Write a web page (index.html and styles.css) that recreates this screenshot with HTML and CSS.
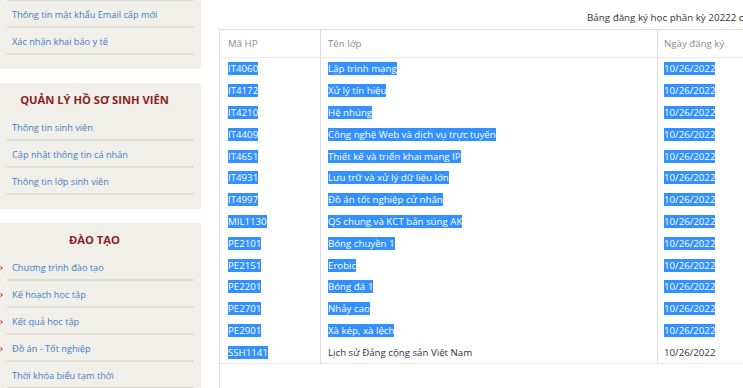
FILE: index.html
```html
<!DOCTYPE html>
<html lang="vi">
<head>
<meta charset="utf-8">
<title>Bảng đăng ký học phần</title>
<link rel="stylesheet" href="styles.css">
</head>
<body>
<div class="page">
  <aside class="sidebar">
    <section class="panel">
      <ul class="menu menu-top">
        <li><a class="link">Thông tin mật khẩu Email cấp mới</a></li>
        <li><a class="link">Xác nhận khai báo y tế</a></li>
      </ul>
    </section>
    <section class="panel">
      <h3 class="panel-title">QUẢN LÝ HỒ SƠ SINH VIÊN</h3>
      <ul class="menu">
        <li><a class="link">Thông tin sinh viên</a></li>
        <li><a class="link">Cập nhật thông tin cá nhân</a></li>
        <li><a class="link">Thông tin lớp sinh viên</a></li>
      </ul>
    </section>
    <section class="panel">
      <h3 class="panel-title">ĐÀO TẠO</h3>
      <ul class="menu">
        <li class="bullet"><a class="link">Chương trình đào tạo</a></li>
        <li class="bullet"><a class="link">Kế hoạch học tập</a></li>
        <li class="bullet"><a class="link">Kết quả học tập</a></li>
        <li class="bullet"><a class="link">Đồ án - Tốt nghiệp</a></li>
        <li><a class="link">Thời khóa biểu tạm thời</a></li>
      </ul>
    </section>
  </aside>
  <main class="main">
    <div class="caption">Bảng đăng ký học phần kỳ 20222 của</div>
    <div class="table-box">
      <table class="grid">
        <thead>
          <tr><th class="c1">Mã HP</th><th class="c2">Tên lớp</th><th class="c3">Ngày đăng ký</th></tr>
        </thead>
        <tbody>
          <tr><td class="c1"><span class="sel">IT4060</span></td><td class="c2"><span class="sel">Lập trình mạng</span></td><td class="c3"><span class="sel">10/26/2022</span></td></tr>
          <tr><td class="c1"><span class="sel">IT4172</span></td><td class="c2"><span class="sel">Xử lý tín hiệu</span></td><td class="c3"><span class="sel">10/26/2022</span></td></tr>
          <tr><td class="c1"><span class="sel">IT4210</span></td><td class="c2"><span class="sel">Hệ nhúng</span></td><td class="c3"><span class="sel">10/26/2022</span></td></tr>
          <tr><td class="c1"><span class="sel">IT4409</span></td><td class="c2"><span class="sel">Công nghệ Web và dịch vụ trực tuyến</span></td><td class="c3"><span class="sel">10/26/2022</span></td></tr>
          <tr><td class="c1"><span class="sel">IT4651</span></td><td class="c2"><span class="sel">Thiết kế và triển khai mạng IP</span></td><td class="c3"><span class="sel">10/26/2022</span></td></tr>
          <tr><td class="c1"><span class="sel">IT4931</span></td><td class="c2"><span class="sel">Lưu trữ và xử lý dữ liệu lớn</span></td><td class="c3"><span class="sel">10/26/2022</span></td></tr>
          <tr><td class="c1"><span class="sel">IT4997</span></td><td class="c2"><span class="sel">Đồ án tốt nghiệp cử nhân</span></td><td class="c3"><span class="sel">10/26/2022</span></td></tr>
          <tr><td class="c1"><span class="sel">MIL1130</span></td><td class="c2"><span class="sel">QS chung và KCT bắn súng AK</span></td><td class="c3"><span class="sel">10/26/2022</span></td></tr>
          <tr><td class="c1"><span class="sel">PE2101</span></td><td class="c2"><span class="sel">Bóng chuyền 1</span></td><td class="c3"><span class="sel">10/26/2022</span></td></tr>
          <tr><td class="c1"><span class="sel">PE2151</span></td><td class="c2"><span class="sel">Erobic</span></td><td class="c3"><span class="sel">10/26/2022</span></td></tr>
          <tr><td class="c1"><span class="sel">PE2201</span></td><td class="c2"><span class="sel">Bóng đá 1</span></td><td class="c3"><span class="sel">10/26/2022</span></td></tr>
          <tr><td class="c1"><span class="sel">PE2701</span></td><td class="c2"><span class="sel">Nhảy cao</span></td><td class="c3"><span class="sel">10/26/2022</span></td></tr>
          <tr><td class="c1"><span class="sel">PE2901</span></td><td class="c2"><span class="sel">Xà kép, xà lệch</span></td><td class="c3"><span class="sel">10/26/2022</span></td></tr>
          <tr><td class="c1"><span class="sel">SSH1141</span></td><td class="c2">Lịch sử Đảng cộng sản Việt Nam</td><td class="c3">10/26/2022</td></tr>
        </tbody>
      </table>
    </div>
  </main>
</div>
</body>
</html>
```
FILE: styles.css
```css
html, body {
  margin: 0;
  padding: 0;
  background: #ffffff;
  overflow: hidden;
}

body {
  width: 743px;
  height: 388px;
  font-family: "Open Sans", "Noto Sans", "Liberation Sans", sans-serif;
}

.page {
  display: flex;
  align-items: flex-start;
  width: 900px;
}

/* ---------- Sidebar ---------- */
.sidebar {
  flex: none;
  width: 201px;
  margin-top: -1px;
}

.panel {
  background: #f1efea;
  padding-bottom: 14px;
  margin-bottom: 14px;
}

.panel-title {
  margin: 0;
  padding: 10px 12px 7px 0;
  line-height: 14px;
  text-align: center;
  font-size: 11.2px;
  font-weight: 700;
  color: #8a1f1f;
}

.menu {
  list-style: none;
  margin: 0 7px;
  padding: 0;
}

.menu-top {
  border-top: 2px solid #dfddd8;
}

.menu li {
  display: flex;
  align-items: center;
  height: 27px;
  box-sizing: border-box;
  padding: 3px 0 0 5px;
  border-bottom: 2px solid #dfddd8;
  font-size: 9.2px;
  line-height: 12px;
}

.link {
  color: #3f7ec6;
  text-decoration: none;
  white-space: nowrap;
}

.bullet::before {
  content: "";
  flex: none;
  width: 3px;
  height: 5px;
  margin-left: -12px;
  margin-right: 9px;
  background: #c63d4f;
  clip-path: polygon(0 0, 100% 50%, 0 100%, 35% 50%);
}

/* ---------- Main ---------- */
.main {
  flex: none;
  width: 680px;
  padding-left: 18px;
}

.caption {
  padding: 12px 0 5px 368px;
  line-height: 12px;
  font-size: 9.8px;
  color: #333333;
  white-space: nowrap;
}

.table-box {
  width: 620px;
  height: 420px;
  border: 1px solid #dddddd;
}

.grid {
  border-collapse: separate;
  border-spacing: 0;
  font-size: 9.7px;
  color: #333333;
}

.grid th {
  height: 27px;
  padding: 0;
  text-align: left;
  font-weight: 400;
  color: #8a8a8a;
  border-bottom: 1px solid #ececec;
  white-space: nowrap;
}

.grid td {
  height: 21.8px;
  padding: 0;
  white-space: nowrap;
}

.grid tbody tr:last-child td {
  border-bottom: 1px solid #e6e6e6;
}

.c1 {
  width: 92px;
  padding-left: 8px !important;
  border-right: 1px solid #dddddd;
}

.c2 {
  width: 329px;
  padding-left: 7px !important;
  border-right: 1px solid #dddddd;
}

.c3 {
  width: 154px;
  padding-left: 6px !important;
}

.sel {
  background: #3390ff;
  color: #ffffff;
}
```
